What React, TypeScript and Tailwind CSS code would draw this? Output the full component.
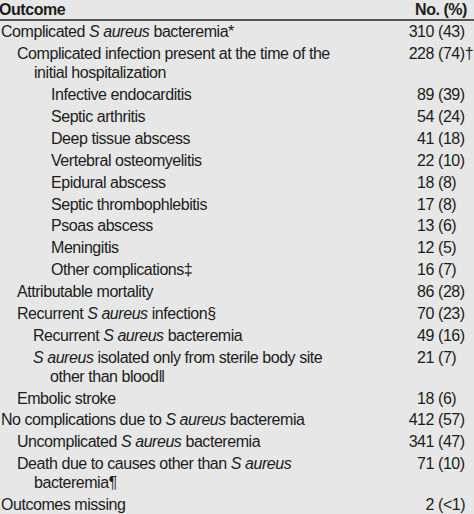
import type { ReactNode } from "react";

type Row = {
  lines: ReactNode[];
  indent: number;
  num?: string;
  pct?: string;
};

const Sa = () => <i>S aureus</i>;

const rows: Row[] = [
  { lines: [<>Complicated <Sa /> bacteremia*</>], indent: 0, num: "310", pct: "(43)" },
  {
    lines: ["Complicated infection present at the time of the", "initial hospitalization"],
    indent: 1,
    num: "228",
    pct: "(74)†",
  },
  { lines: ["Infective endocarditis"], indent: 2, num: "89", pct: "(39)" },
  { lines: ["Septic arthritis"], indent: 2, num: "54", pct: "(24)" },
  { lines: ["Deep tissue abscess"], indent: 2, num: "41", pct: "(18)" },
  { lines: ["Vertebral osteomyelitis"], indent: 2, num: "22", pct: "(10)" },
  { lines: ["Epidural abscess"], indent: 2, num: "18", pct: "(8)" },
  { lines: ["Septic thrombophlebitis"], indent: 2, num: "17", pct: "(8)" },
  { lines: ["Psoas abscess"], indent: 2, num: "13", pct: "(6)" },
  { lines: ["Meningitis"], indent: 2, num: "12", pct: "(5)" },
  { lines: ["Other complications‡"], indent: 2, num: "16", pct: "(7)" },
  { lines: ["Attributable mortality"], indent: 1, num: "86", pct: "(28)" },
  { lines: [<>Recurrent <Sa /> infection§</>], indent: 1, num: "70", pct: "(23)" },
  { lines: [<>Recurrent <Sa /> bacteremia</>], indent: 1.5, num: "49", pct: "(16)" },
  {
    lines: [<><Sa /> isolated only from sterile body site</>, "other than blood‖"],
    indent: 1.5,
    num: "21",
    pct: "(7)",
  },
  { lines: ["Embolic stroke"], indent: 1, num: "18", pct: "(6)" },
  { lines: [<>No complications due to <Sa /> bacteremia</>], indent: 0, num: "412", pct: "(57)" },
  { lines: [<>Uncomplicated <Sa /> bacteremia</>], indent: 1, num: "341", pct: "(47)" },
  {
    lines: [<>Death due to causes other than <Sa /></>, "bacteremia¶"],
    indent: 1,
    num: "71",
    pct: "(10)",
  },
  { lines: ["Outcomes missing"], indent: 0, num: "2", pct: "(<1)" },
];

const indentClass = (level: number) => {
  switch (level) {
    case 0:
      return "pl-[1px]";
    case 1:
      return "pl-[17px]";
    case 1.5:
      return "pl-[33px]";
    default:
      return "pl-[51px]";
  }
};

const contClass = (level: number) => {
  switch (level) {
    case 0:
      return "pl-[17px]";
    case 1:
      return "pl-[34px]";
    case 1.5:
      return "pl-[50px]";
    default:
      return "pl-[68px]";
  }
};

export default function App() {
  return (
    <div
      className="w-[474px] h-[514px] overflow-hidden bg-[#e6e7e6] text-[#1c1c1c] text-[16px] tracking-[-0.45px]"
      style={{ fontFamily: '"Liberation Sans", Arial, sans-serif' }}
    >
      {/* Header */}
      <div className="flex justify-between items-start h-[21px] leading-[19px] font-bold border-b-2 border-[#555555] pr-[7px]">
        <span className="-ml-[1px]">Outcome</span>
        <span>No. (%)</span>
      </div>

      {/* Body */}
      {rows.map((row, i) => (
        <div key={i} className="flex py-[1.45px] leading-[19px]">
          <div className="flex-1 whitespace-nowrap">
            {row.lines.map((line, j) => (
              <div key={j} className={j === 0 ? indentClass(row.indent) : contClass(row.indent)}>
                {line}
              </div>
            ))}
          </div>
          <div className="w-[80px] flex whitespace-nowrap">
            <span className="w-[40px] text-right">{row.num}</span>
            <span className="pl-[4px]">{row.pct}</span>
          </div>
        </div>
      ))}
      <div className="border-t-2 border-[#555555]" />
    </div>
  );
}
